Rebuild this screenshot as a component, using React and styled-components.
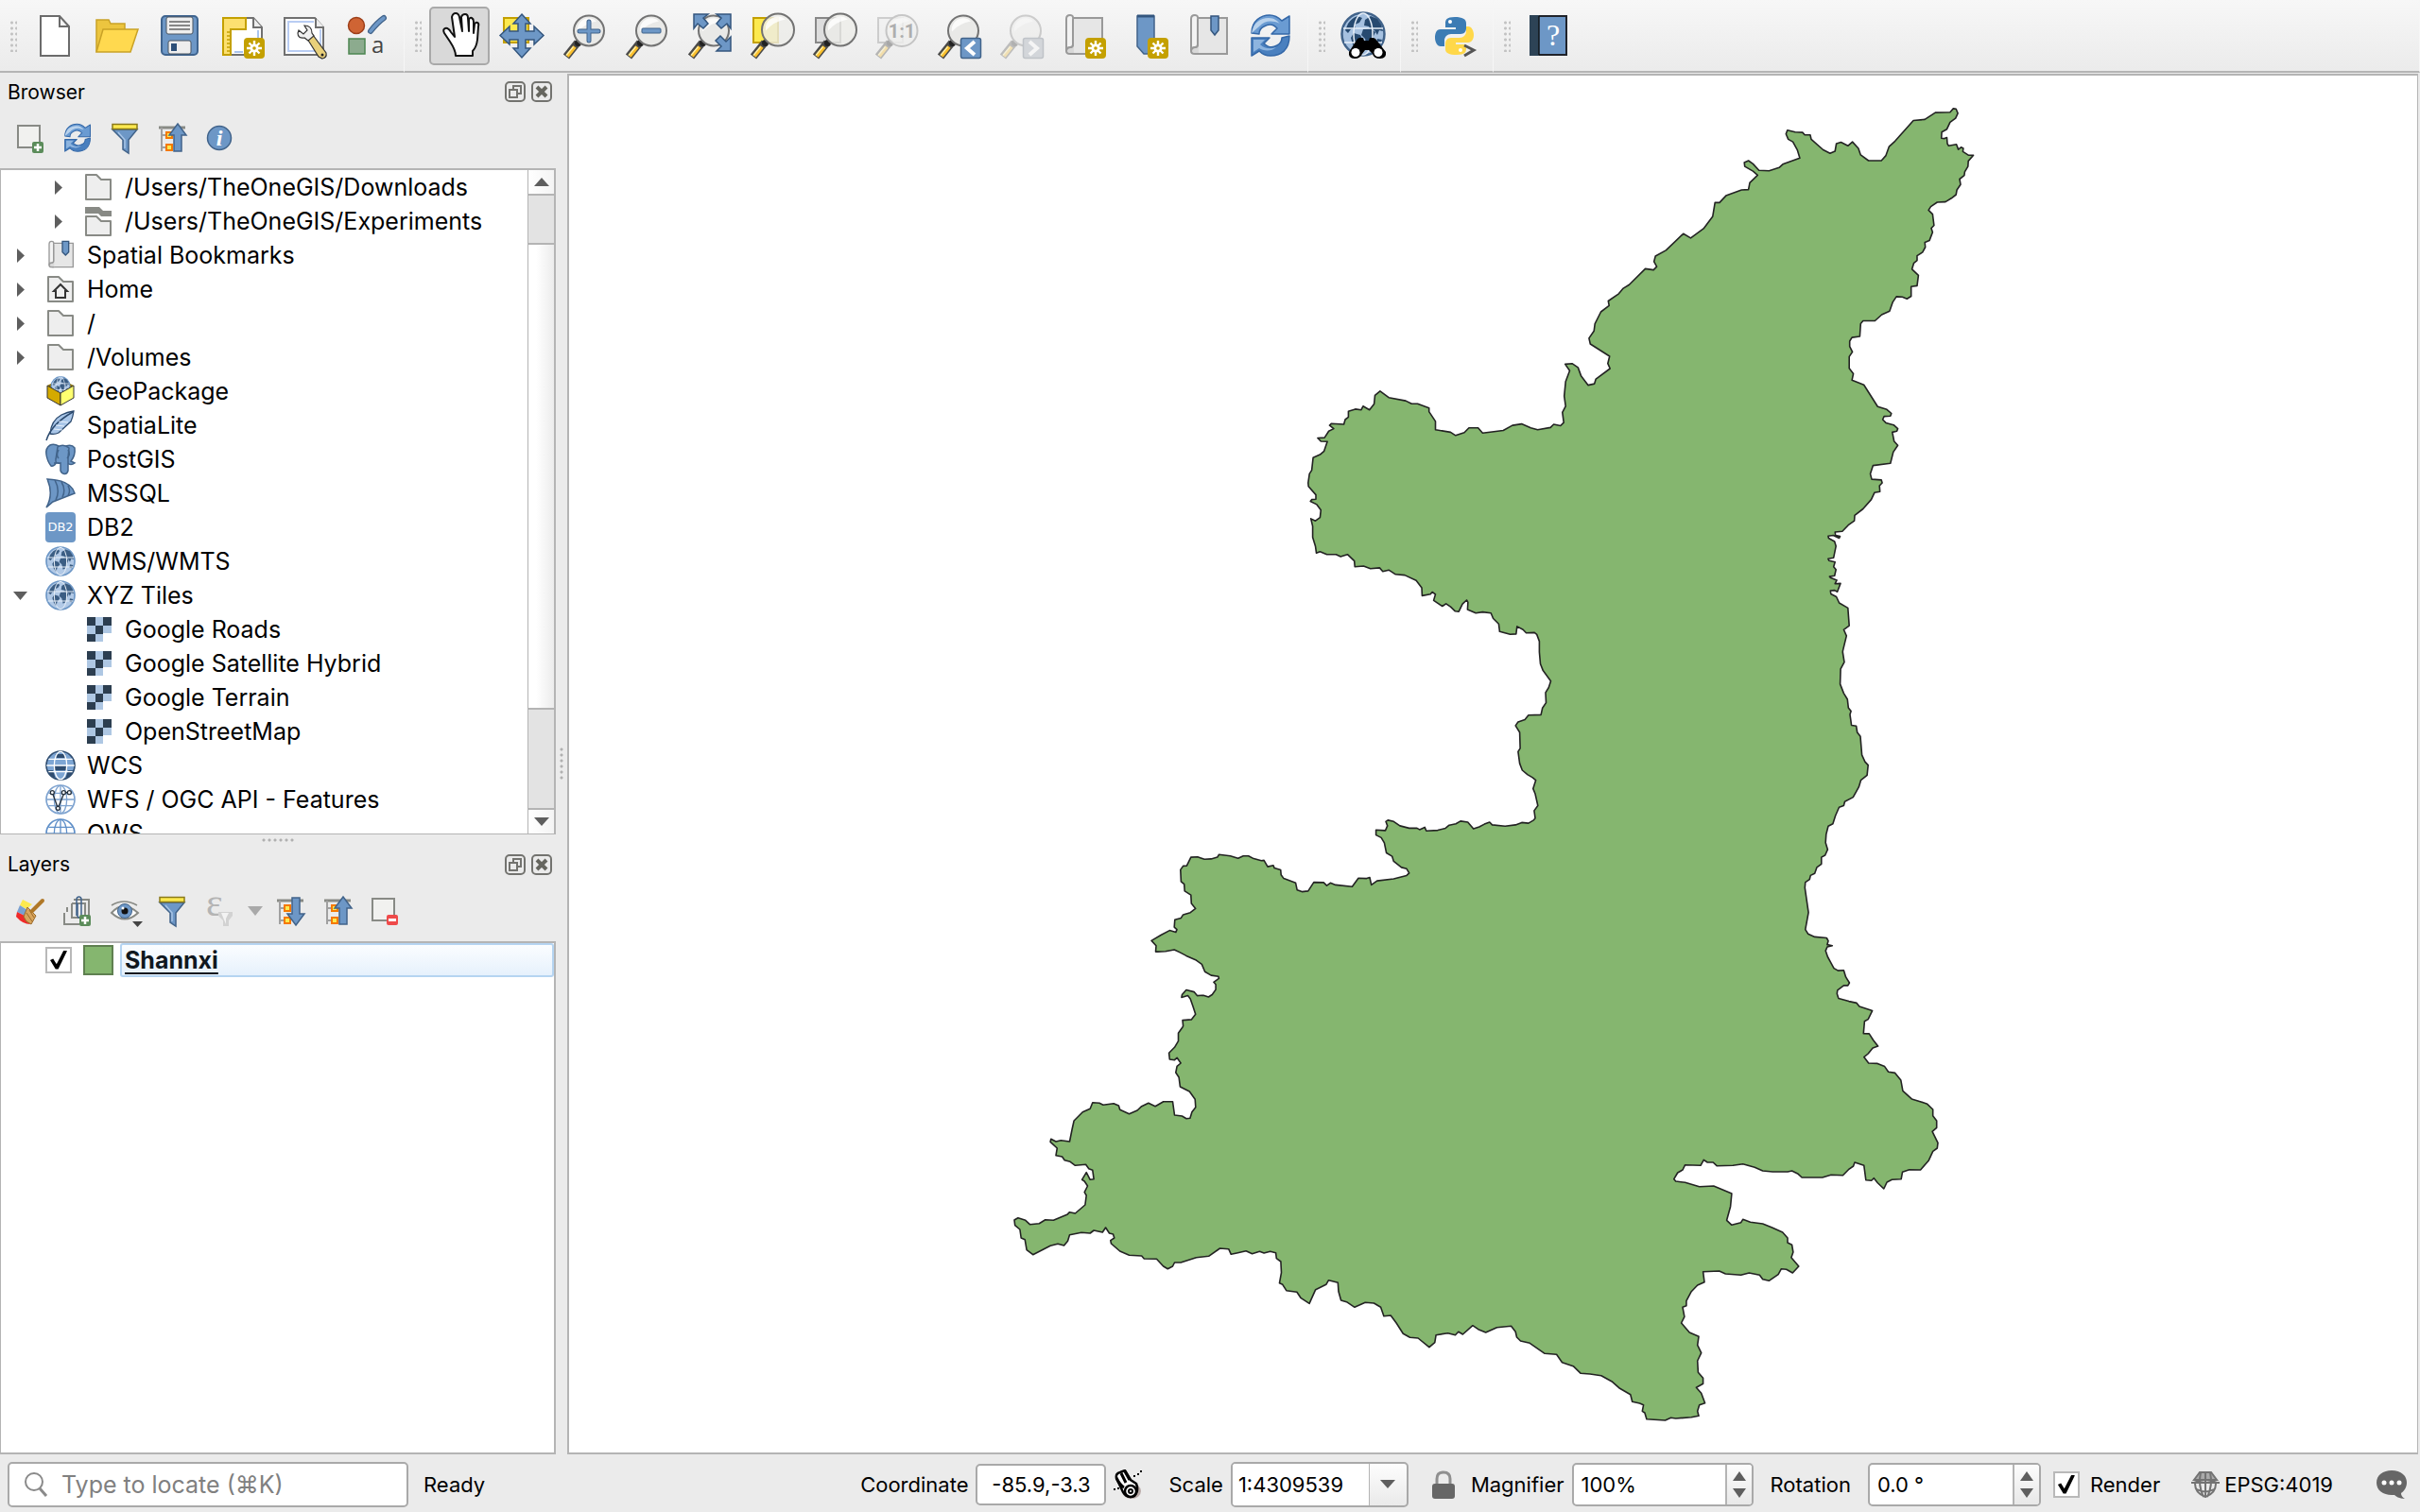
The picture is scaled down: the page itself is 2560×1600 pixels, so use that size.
import React from "react";
import styled, { createGlobalStyle, css } from "styled-components";

const GlobalStyle = createGlobalStyle`
  * { box-sizing: border-box; }
  body {
    margin: 0;
    background: #ebebeb;
    color: #000;
    font-family: Inter, "Liberation Sans", sans-serif;
    font-size: 22px;
  }
  button, input, select { font: inherit; color: inherit; }
`;

const line = "#b4b4b4";

/* ---------- window frame ---------- */

const Window = styled.div`
  display: flex;
  flex-direction: column;
  height: 100vh;
  overflow: hidden;
`;

const Toolbars = styled.header`
  display: flex;
  flex: none;
  height: 77px;
`;

const ToolGroup = styled.div`
  display: flex;
  align-items: center;
  gap: 7px;
  flex: ${(p) => (p.$fill ? 1 : "none")};
  padding: 0 6px 0 10px;
  background: linear-gradient(#f7f7f7, #ebebeb);
  border-right: 1px solid #f6f6f6;
  border-bottom: 2px solid ${line};
`;

const Grip = styled.span`
  width: 8px;
  height: 34px;
  background: radial-gradient(circle, #c2c2c2 1px, transparent 2px) 0 0 / 5px 6px;
`;

const Tools = styled.div`
  display: flex;
`;

const ToolButton = styled.button`
  display: grid;
  place-items: center;
  width: 64px;
  height: 62px;
  margin: 0 1px;
  padding: 0;
  border: 2px solid transparent;
  border-radius: 5px;
  background: none;
  ${(p) =>
    p.$active &&
    css`
      background: #d9d9d9;
      border-color: #a9a9a9;
    `}
`;

const Body = styled.div`
  display: flex;
  flex: 1;
  min-height: 0;
`;

const Dock = styled.aside`
  display: flex;
  flex-direction: column;
  flex: none;
  width: 588px;
`;

const Panel = styled.section`
  display: flex;
  flex-direction: column;
  flex: ${(p) => p.$grow} 1 0;
  min-height: 0;
`;

const PanelHeader = styled.div`
  display: flex;
  align-items: center;
  gap: 6px;
  flex: none;
  height: 40px;
  padding: 0 4px 0 8px;
`;

const PanelTitle = styled.h2`
  flex: 1;
  margin: 0;
  font-size: 21px;
  font-weight: 400;
`;

const HeaderButton = styled.button`
  display: grid;
  place-items: center;
  width: 22px;
  height: 22px;
  padding: 0;
  border: 2px solid #73736f;
  border-radius: 5px;
  background: none;
`;

const PanelTools = styled.div`
  display: flex;
  align-items: center;
  flex: none;
  height: 58px;
  margin-bottom: 3px;
  padding-left: 7px;
`;

const PanelButton = styled.button`
  display: grid;
  place-items: center;
  width: ${(p) => (p.$narrow ? 25 : 50)}px;
  height: 44px;
  padding: 0;
  border: 0;
  background: none;
`;

const RowSplitter = styled.div`
  display: grid;
  place-items: center;
  flex: none;
  height: 12px;
`;

const ColumnSplitter = styled.div`
  display: grid;
  place-items: center;
  flex: none;
  width: 12px;
`;

const Dots = styled.span`
  width: ${(p) => (p.$vertical ? 6 : 36)}px;
  height: ${(p) => (p.$vertical ? 36 : 6)}px;
  background: radial-gradient(circle, #b0b0b0 1px, transparent 2px) 0 0 / 6px 6px;
`;

/* ---------- browser tree ---------- */

const TreeBox = styled.div`
  display: flex;
  flex: 1;
  min-height: 0;
  background: #fff;
  border: 2px solid ${line};
  border-width: 2px 2px 1px 1px;
  overflow: hidden;
`;

const Tree = styled.ul`
  flex: 1;
  margin: 0;
  padding: 0;
  list-style: none;
  overflow: hidden;
`;

const Node = styled.li`
  display: flex;
  align-items: center;
  height: 36px;
  padding-left: ${(p) => p.$depth * 40}px;
  font-size: 25px;
  white-space: nowrap;
`;

const Toggle = styled.button`
  display: grid;
  place-items: center;
  width: 41px;
  height: 36px;
  padding: 0;
  border: 0;
  background: none;
  visibility: ${(p) => (p.$shown ? "visible" : "hidden")};
`;

const NodeIcon = styled.span`
  display: grid;
  place-items: center;
  width: 44px;
  margin-right: 6px;
`;

const ScrollBar = styled.div`
  display: flex;
  flex-direction: column;
  flex: none;
  width: 28px;
  border-left: 1px solid ${line};
  background: #e3e3e3;
`;

const ScrollButton = styled.button`
  display: grid;
  place-items: center;
  height: 25px;
  padding: 0;
  border: 0;
  background: linear-gradient(90deg, #fff, #f4f4f4);
`;

const ScrollGap = styled.div`
  flex: ${(p) => p.$grow} 1 0;
  border-top: 2px solid ${line};
  border-bottom: 2px solid ${line};
`;

const ScrollThumb = styled.div`
  flex: 490 1 0;
  background: linear-gradient(90deg, #fff 30%, #ececec);
`;

/* ---------- layer list ---------- */

const LayerList = styled.ul`
  flex: 1;
  margin: 0;
  padding: 0 0 0 47px;
  list-style: none;
  background: #fff;
  border: 2px solid ${line};
  border-left-width: 1px;
`;

const LayerRow = styled.li`
  display: flex;
  align-items: center;
  height: 36px;
`;

const CheckBox = styled.input`
  appearance: none;
  display: grid;
  place-items: center;
  flex: none;
  width: 28px;
  height: 28px;
  margin: 0;
  border: 2px solid #b9b9b9;
  background: #fff;
  &:checked::before {
    content: "";
    width: 18px;
    height: 20px;
    background: #000;
    clip-path: polygon(0 52%, 18% 45%, 38% 74%, 80% 0, 100% 4%, 48% 100%, 32% 100%);
  }
`;

const Swatch = styled.span`
  width: 32px;
  height: 32px;
  margin: 0 7px 0 12px;
  background: #85b66f;
  border: 2px solid #5f8050;
`;

const LayerName = styled.label`
  flex: 1;
  height: 36px;
  padding-left: 3px;
  border: 2px solid #b5d4f1;
  border-radius: 3px;
  background: linear-gradient(#fbfdff, #e6f1fc);
  color: #10181f;
  font-size: 25px;
  font-weight: 700;
  line-height: 32px;
  text-decoration: underline;
  text-decoration-thickness: 2px;
  text-underline-offset: 4px;
`;

/* ---------- map canvas ---------- */

const Canvas = styled.main`
  flex: 1;
  min-width: 0;
  margin: 1px 2px 0 0;
  background: #fff;
  border: 2px solid ${line};
  border-right-width: 1px;
`;

const MapDrawing = styled.svg`
  display: block;
  width: 100%;
  height: 100%;
`;

/* ---------- status bar ---------- */

const StatusBar = styled.footer`
  display: flex;
  align-items: center;
  flex: none;
  height: 61px;
  padding: 2px 14px 0 8px;
  white-space: nowrap;
`;

const Locator = styled.label`
  display: flex;
  align-items: center;
  gap: 14px;
  width: 424px;
  height: 48px;
  padding-left: 15px;
  background: #fff;
  border: 2px solid #a9a9a9;
  border-radius: 5px;
`;

const LocatorInput = styled.input`
  flex: 1;
  min-width: 0;
  padding: 0;
  border: 0;
  outline: 0;
  background: none;
  font-size: 25px;
  &::placeholder { color: #808080; opacity: 1; }
`;

const Message = styled.span`
  flex: 1;
  padding-left: 16px;
`;

const Field = styled.div`
  display: flex;
  align-items: center;
  gap: ${(p) => p.$gap || 8}px;
  margin-left: ${(p) => p.$before}px;
`;

const TextBox = styled.input`
  width: 138px;
  height: 44px;
  padding: 0;
  text-align: center;
  background: #fff;
  border: 2px solid #a9a9a9;
  border-radius: 5px;
`;

const SelectBox = styled.div`
  display: grid;
  grid-template-columns: 1fr 40px;
  width: 188px;
  height: 48px;
  border: 2px solid #a9a9a9;
  border-radius: 5px;
  background: linear-gradient(#fdfdfd, #eaeaea);
  overflow: hidden;
  & > * { grid-row: 1; }
`;

const Select = styled.select`
  grid-column: 1 / 3;
  appearance: none;
  padding: 0 0 0 6px;
  border: 0;
  background: linear-gradient(90deg, #fff 144px, ${line} 144px, ${line} 145px, transparent 145px);
`;

const SelectArrow = styled.span`
  grid-column: 2;
  display: grid;
  place-items: center;
  pointer-events: none;
`;

const SpinBox = styled.div`
  display: flex;
  width: ${(p) => p.$width}px;
  height: 46px;
  border: 2px solid #a9a9a9;
  border-radius: 5px;
  background: #fff;
  overflow: hidden;
`;

const SpinInput = styled.input`
  flex: 1;
  min-width: 0;
  padding: 0 0 0 8px;
  border: 0;
  background: none;
`;

const SpinButtons = styled.div`
  display: grid;
  grid-template-rows: 1fr 1fr;
  width: 28px;
  padding: 3px 0;
  border-left: 2px solid ${line};
  background: linear-gradient(#fdfdfd, #e8e8e8);
`;

const PlainButton = styled.button`
  display: flex;
  align-items: center;
  justify-content: center;
  gap: 4px;
  padding: 0;
  border: 0;
  background: none;
`;

/* ---------- shared drawings ---------- */

const Drawing = styled.svg`
  display: block;
  overflow: visible;
`;

const Icon = ({ size = 48, box = 48, children }) => (
  <Drawing width={size} height={size} viewBox={`0 0 ${box} ${box}`} aria-hidden="true">
    {children}
  </Drawing>
);

const Triangle = ({ dir, color = "#5e5e5e", w = 16, h = 10 }) => {
  const shapes = {
    up: `M0 ${h}L${w / 2} 0L${w} ${h}z`,
    down: `M0 0H${w}L${w / 2} ${h}z`,
    right: `M0 0L${w} ${h / 2}L0 ${h}z`,
  };
  return (
    <svg width={w} height={h} aria-hidden="true">
      <path d={shapes[dir]} fill={color} />
    </svg>
  );
};

const Sun = () => (
  <g>
    <rect x="26" y="26" width="22" height="22" rx="4" fill="#c4a000" />
    <path d="M37 29v16M29 37h16M31.500 31.500l11 11M42.500 31.500l-11 11" stroke="#fff" strokeWidth="2.400" />
    <circle cx="37" cy="37" r="4.500" fill="#fff" />
    <circle cx="37" cy="37" r="1.800" fill="#c4a000" />
  </g>
);

const Lens = ({ cx = 29, cy = 18.5, r = 16, clear }) => (
  <g>
    <path d="M17 31L5 46" stroke="#4a4a4a" strokeWidth="8" />
    <path d="M14 35.500L6 45.500" stroke="#fbc02d" strokeWidth="4" />
    <path d="M12.500 35.500L5 44.500" stroke="#fff3b0" strokeWidth="1.200" />
    <circle cx="17.500" cy="31.500" r="3.500" fill="#222" />
    <circle cx={cx} cy={cy} r={r} fill={clear ? "#ecece8" : "#e9e9e7"} fillOpacity={clear ? 0.8 : 1} stroke="#737373" strokeWidth="2" />
    <path d={`M${cx - r + 4} ${cy + 1}a${r - 4} ${r - 4} 0 0 1 ${r + 4} -${r - 5}q-12 2-${r + 4} ${r - 5}z`} fill="#fff" fillOpacity="0.8" />
  </g>
);

const Page = ({ x = 4 }) => (
  <g stroke="#707070" strokeWidth="2" fill="#fff">
    <path d={`M${x} 5h32l9 10v29H${x}z`} />
    <path d="M36 5v10h9" fill="#ededed" />
  </g>
);

const Scroll = () => (
  <g stroke="#999" strokeWidth="2">
    <path d="M12 5h32v38H10" fill="#e6e6e6" />
    <path d="M13 7v26q0 3-3 3q-4 0-4 4q0 3 4 3h4" fill="#d8d8d8" />
    <path d="M6 40V6q0-4 4-4t3 5v26q0 3-3 3q-4 0-4 4z" fill="#f3f3f3" />
  </g>
);

const Badge = ({ dir }) => (
  <g>
    <rect x="26.500" y="26.500" width="21" height="21" rx="2" fill="#6d97c6" stroke="#41638a" strokeWidth="1.500" />
    <path d={dir === "left" ? "M41 30l-8 7 8 7" : "M33 30l8 7-8 7"} fill="none" stroke="#fff" strokeWidth="4" />
  </g>
);

const land = [
  "M8 13q4-6 10-8l5 2-3 5-5 2 1 4-5 1-3 4-3-3z",
  "M14 23l7 2 2 4-4 5-2 7-4-6-2-7z",
  "M26 9l6-4 7 3 4 6 2 7-4-1-2 5-3-5-4-1-2-3-5-1z",
  "M24 19l8-1 5 4-3 6-2 7-4 2-2-8-4-4z",
  "M39 29l5 1-2 5-4-1z",
];

const Earth = ({ sea = "#b1c9e6", ground = "#3b5d83", rim = "#6d97c6" }) => (
  <g>
    <circle cx="24" cy="24" r="22.500" fill={sea} stroke={rim} strokeWidth="2.500" />
    {land.map((d) => (
      <path key={d} d={d} fill={ground} />
    ))}
    <g fill="none" stroke="#e8f0f9" strokeWidth="1.500">
      <ellipse cx="24" cy="24" rx="10" ry="22" />
      <path d="M3 18h42M4 33h40" />
    </g>
  </g>
);

const GridGlobe = ({ fill, color, band }) => (
  <g>
    <circle cx="24" cy="24" r="22.500" fill={fill} stroke={color} strokeWidth="2.500" />
    {band && <path d="M16 6h16l-1 6H17zM14 24h20v8H14zM3 32h9l4 12Q7 41 3 32zM45 32h-9l-4 12q9-3 13-12z" fill={color} />}
    <g fill="none" stroke={band ? "#fff" : color} strokeWidth="2">
      <ellipse cx="24" cy="24" rx="10" ry="22" />
      <path d="M5 14h38M2 24h44M5 34h38" />
      {!band && <path d="M24 2v44" />}
    </g>
  </g>
);

const Refresh = () => (
  <g stroke="#3468a8" strokeWidth="1.500" strokeLinejoin="round">
    <path d="M4 21C4 8 14 2 23 2c6 0 10 3 13 6l8-5v19H25l6-6c-4-5-9-5-14-2-4 2-5 5-5 8z" fill="#6a9bd2" />
    <path d="M4 21C6 10 13 5 22 5c6 0 9 3 12 6-9-4-16-3-22 3z" fill="#b9d2ec" stroke="none" />
    <path d="M44 24c0 15-9 21-20 21-6 0-9-2-12-5l-8 5V26h19l-6 6c4 4 9 5 14 2 4-2 5-5 5-8z" fill="#4a80bf" />
    <path d="M6 28h12l-5 5c5 5 11 5 17 3-5 5-14 4-18 1l-6 4z" fill="#8db4df" stroke="none" />
  </g>
);

const Funnel = () => (
  <g stroke="#41638a" strokeWidth="1.500">
    <path d="M3 7h26l-9 11v14l-6-4V18z" fill="#6d97c6" />
    <path d="M9 10l7 8v9" fill="none" stroke="#a8c5e6" />
    <rect x="3" y="1.500" width="26" height="5" fill="#fce94f" stroke="#8a7a1a" />
  </g>
);

const TreeArrow = ({ up }) => (
  <g>
    <path d="M2 5h28" stroke="#888a85" strokeWidth="3" />
    <path d="M5 5v25M5 13h5M5 26h5" stroke="#a0a0a0" strokeWidth="2" fill="none" />
    <path d="M10 10h6v6h-6zM10 23h6v6h-6z" fill="#fce94f" stroke="#f57900" strokeWidth="2" />
    <path
      d={up ? "M22 1l9 12h-5v17h-8V13h-5z" : "M22 31l9-12h-5V2h-8v17h-5z"}
      fill="#6d97c6"
      stroke="#41638a"
      strokeWidth="1.500"
    />
  </g>
);

const Folder = ({ home, linked }) => (
  <Icon size={32} box={32}>
    {linked && <path d="M2 1h15l4 4h9v6H19l-3-3H2z" fill="#888a85" />}
    <path
      d={linked ? "M3 11h11l5 5h10v15H3z" : "M3 3h11l5 5h10v21H3z"}
      fill="#eee"
      stroke="#888a85"
      strokeWidth="2"
      strokeLinejoin="round"
    />
    {home && <path d="M9 18l7-7 7 7h-2v7H11v-7z" fill="none" stroke="#333" strokeWidth="2" />}
  </Icon>
);

/* ---------- main toolbar ---------- */

const fileTools = [
  ["New Project", <path key="a" d="M9 3h20l10 11v31H9zM29 3v11h10" fill="#fff" stroke="#6b6b6b" strokeWidth="2" />],
  [
    "Open Project",
    <g key="a" stroke="#c9a227" strokeWidth="1.500">
      <path d="M2 40V7h13l2 4h15v7L20 40z" fill="#ecc53f" />
      <path d="M2 41L9 17h37l-8 24z" fill="#ffd94f" />
    </g>,
  ],
  [
    "Save Project",
    <g key="a">
      <rect x="5" y="3" width="38" height="41" rx="4" fill="#6d97c6" stroke="#3f648f" strokeWidth="2" />
      <rect x="10" y="4" width="28" height="18" rx="2" fill="#eee" stroke="#4a5560" />
      <path d="M13 9h22M13 13h22M13 17h22" stroke="#666" strokeWidth="1.500" />
      <rect x="12" y="29" width="24" height="14" rx="2" fill="#eee" stroke="#4a5560" />
      <rect x="15" y="32" width="6" height="8" fill="#2d4f78" />
    </g>,
  ],
  [
    "New Print Layout",
    <g key="a">
      <Page />
      <path d="M4 5h24v12H12v27H4z" fill="#fce070" stroke="#c4a000" strokeWidth="2" />
      <path d="M8 20h4M8 24h4M8 28h4M8 32h4M8 36h4M8 40h4" stroke="#c4a000" strokeWidth="1.500" />
      <path d="M41 18v8M16 41h9" stroke="#a9c4ee" strokeWidth="2" />
      <Sun />
    </g>,
  ],
  [
    "Layout Manager",
    <g key="a">
      <Page x={3} />
      <path d="M34 9H7v31h34V17" fill="none" stroke="#b9cdf3" strokeWidth="2" />
      <path d="M27 27l6-4 14 19q1 5-4 6l-4-2z" fill="#e9d07a" stroke="#333" strokeWidth="1.200" />
      <circle cx="43" cy="44" r="1.500" fill="#222" />
      <path d="M24 13q8 0 8 8l2 3-6 5-4-3q-7 1-7-5l1-3 5 4 4-4z" fill="#f0f0f0" stroke="#333" strokeWidth="1.200" />
    </g>,
  ],
  [
    "Style Manager",
    <g key="a">
      <circle cx="13" cy="13" r="8.500" fill="#cf6434" stroke="#9d3f1a" strokeWidth="1.500" />
      <path d="M28 19q7-9 14-14" stroke="#41638a" strokeWidth="6" strokeLinecap="round" />
      <path d="M28 19q7-9 14-14" stroke="#6d97c6" strokeWidth="3.500" strokeLinecap="round" />
      <rect x="5" y="27" width="17" height="16" fill="#8cab8e" stroke="#4d8652" strokeWidth="1.500" />
      <text x="29" y="42" fontSize="24" fill="#444" fontFamily="Open Sans, sans-serif">a</text>
    </g>,
  ],
];

const arrowFour =
  "M24 1l9 10h-5v8h9v-5l10 9.500-10 9.500v-5h-9v9h5L24 47l-9-10h5v-9h-9v5L1 23.500 11 14v5h9v-8h-5z";

const mapTools = [
  [
    "Pan Map",
    <path
      key="a"
      d="M20 45Q20 39 14 30L8 21Q6 17 9 16T15 20L19 25L16 4Q17 0 20 0T24 4L27 19L26 4Q27 1 30 1T33 5L34 19V7Q35 4 37 5T39 9V21L40 12Q41 9 43 10T44 14L43 28Q42 36 38 40V45z"
      fill="#fff"
      stroke="#111"
      strokeWidth="2"
      strokeLinejoin="round"
    />,
    true,
  ],
  [
    "Pan Map to Selection",
    <g key="a">
      <rect x="5" y="5" width="26" height="26" fill="#fce94f" stroke="#c4a000" strokeWidth="2" />
      <path d={arrowFour} fill="#6d97c6" stroke="#34567e" strokeWidth="1.500" />
    </g>,
  ],
  ["Zoom In", <g key="a"><Lens /><path d="M29 9v20M19 19h20" stroke="#41638a" strokeWidth="5" strokeLinecap="round" /><path d="M29 9v20M19 19h20" stroke="#6d97c6" strokeWidth="3" strokeLinecap="round" /></g>],
  ["Zoom Out", <g key="a"><Lens /><rect x="19" y="16" width="20" height="5" rx="1" fill="#6d97c6" stroke="#41638a" /></g>],
  [
    "Zoom Full",
    <g key="a">
      <Lens />
      <g fill="#6d97c6" stroke="#34567e" strokeWidth="1.500">
        <path d="M8 1h15l-5 4 5 6-5 5-6-5-4 5z" />
        <path d="M47 1v15l-4-5-6 5-5-5 5-6-5-4z" />
        <path d="M47 40H32l5-5-6-6 5-5 6 6 5-5z" />
      </g>
    </g>,
  ],
  ["Zoom to Selection", <g key="a"><rect x="5" y="5" width="26" height="26" fill="#fce94f" stroke="#c4a000" strokeWidth="2" /><Lens cx={31} cy={17.5} r={17} clear /></g>],
  ["Zoom to Layer", <g key="a"><rect x="5" y="5" width="26" height="26" fill="#ddd" stroke="#888" strokeWidth="2" /><Lens cx={31} cy={17.5} r={17} clear /></g>],
  [
    "Zoom to Native Resolution",
    <g key="a" opacity="0.35">
      <rect x="5" y="5" width="26" height="26" fill="#eee" stroke="#888" strokeWidth="2" />
      <Lens cx={30} cy={18.5} r={16.5} clear />
      <text x="30" y="26" fontSize="20" fontWeight="700" textAnchor="middle" fill="#333" fontFamily="Roboto, sans-serif">1:1</text>
    </g>,
  ],
  ["Zoom Last", <g key="a"><Lens /><Badge dir="left" /></g>],
  [
    "Zoom Next",
    <g key="a">
      <g opacity="0.3"><Lens /></g>
      <rect x="26.500" y="26.500" width="21" height="21" rx="2" fill="#d3d6da" stroke="#bfc3c8" strokeWidth="1.500" />
      <path d="M33 30l8 7-8 7" fill="none" stroke="#f5f5f5" strokeWidth="4" />
    </g>,
  ],
  ["New Map View", <g key="a"><Scroll /><Sun /></g>],
  ["New Spatial Bookmark", <g key="a"><path d="M15 3h18v35l-5 5h-6l-7-8z" fill="#6d97c6" stroke="#41638a" strokeWidth="1.500" /><path d="M15 3h18" stroke="#34567e" strokeWidth="3" /><Sun /></g>],
  ["Show Spatial Bookmarks", <g key="a"><Scroll /><path d="M27 3h8v15l-4 5-4-5z" fill="#6d97c6" stroke="#34567e" strokeWidth="1.500" /></g>],
  ["Refresh", <Refresh key="a" />],
];

const metaTools = [
  [
    "MetaSearch",
    <g key="a">
      <g transform="translate(0 -2)"><Earth sea="#a6c1e0" ground="#274a70" rim="#41638a" /></g>
      <path d="M18 27l2-1h4l1 3h5l1-3h4l2 1 11 14q1 7-6 7t-8-5l-4-4h-4l-3 4q-2 5-8 5-7 0-6-7z" fill="#000" />
      <circle cx="16" cy="41.500" r="4.500" fill="#fff" />
      <circle cx="40" cy="41.500" r="4.500" fill="#fff" />
    </g>,
  ],
];

const pythonTools = [
  [
    "Python Console",
    <g key="a">
      <path d="M23 4c-9 0-10 3-10 7v4h11v2H8c-5 0-6 5-6 9s2 9 6 9h4v-6c0-4 3-7 7-7h10c4 0 6-3 6-6v-5c0-5-4-7-12-7z" fill="#3c7cb4" />
      <circle cx="18" cy="9" r="2" fill="#fff" />
      <path d="M25 44c9 0 10-3 10-7v-4H24v-2h13c4 0 6-4 6-8s-2-9-6-9h-2v5c0 4-3 7-7 7H19c-4 0-6 3-6 6v6c0 4 4 6 12 6z" fill="#ffd84a" />
      <circle cx="29" cy="39" r="2" fill="#fff" />
      <path d="M33 34l10 5-10 6" fill="none" stroke="#555" strokeWidth="3" />
    </g>,
  ],
];

const helpTools = [
  [
    "Help Contents",
    <g key="a">
      <rect x="5" y="3" width="38" height="41" fill="#6d97c6" stroke="#20232a" strokeWidth="2" />
      <rect x="4" y="2" width="10" height="43" fill="#2d4356" />
      <path d="M14 3v41" stroke="#101418" strokeWidth="1.500" />
      <text x="29" y="34" fontSize="32" textAnchor="middle" fill="#fff" fontFamily="Liberation Serif, serif">?</text>
    </g>,
  ],
];

const ToolBar = ({ tools, fill }) => (
  <ToolGroup $fill={fill}>
    <Grip />
    <Tools>
      {tools.map(([name, art, active]) => (
        <ToolButton key={name} type="button" aria-label={name} $active={active}>
          <Icon>{art}</Icon>
        </ToolButton>
      ))}
    </Tools>
  </ToolGroup>
);

/* ---------- panels ---------- */

const Header = ({ title }) => (
  <PanelHeader>
    <PanelTitle>{title}</PanelTitle>
    <HeaderButton type="button" aria-label={`Float ${title}`}>
      <svg width="16" height="16" viewBox="0 0 16 16" fill="none" stroke="#73736f" strokeWidth="2">
        <path d="M6 6V2h8v8h-4" />
        <rect x="2" y="6" width="8" height="8" />
      </svg>
    </HeaderButton>
    <HeaderButton type="button" aria-label={`Close ${title}`}>
      <svg width="16" height="16" viewBox="0 0 16 16" stroke="#66665f" strokeWidth="4">
        <path d="M3 3l10 10M13 3L3 13" />
      </svg>
    </HeaderButton>
  </PanelHeader>
);

const small = (art) => <Icon size={32} box={32}>{art}</Icon>;

const browserTools = [
  [
    "Add Selected Layers",
    <g key="a">
      <rect x="3" y="3" width="23" height="23" fill="#f1f1ef" stroke="#888a85" strokeWidth="2" />
      <rect x="18" y="20" width="12" height="12" rx="2" fill="#5b8c5a" />
      <path d="M24 22v8M20 26h8" stroke="#fff" strokeWidth="2.500" />
    </g>,
  ],
  ["Refresh", <g key="a" transform="scale(.67)"><Refresh /></g>],
  ["Filter Browser", <Funnel key="a" />],
  ["Collapse All", <TreeArrow key="a" up />],
  [
    "Properties",
    <g key="a">
      <circle cx="16" cy="16" r="12.500" fill="#6d97c6" stroke="#41638a" strokeWidth="1.500" />
      <text x="16" y="24" fontSize="24" fontStyle="italic" fontWeight="700" textAnchor="middle" fill="#fff" fontFamily="Liberation Serif, serif">i</text>
    </g>,
  ],
];

const layerTools = [
  [
    "Open Layer Styling",
    <g key="a">
      <path d="M8 4l10 5-6 5-7-4z" fill="#fce94f" />
      <path d="M5 10l8 5-3 6-8-4z" fill="#7aa0d0" />
      <path d="M2 17l8 4 6 9q-8 0-15-8z" fill="#ef2929" />
      <path d="M13 12l9 9-5 9q-6-2-8-8z" fill="#d9a55c" stroke="#9a6a2a" />
      <path d="M12 18l6 9M15 15l5 8" stroke="#9a6a2a" />
      <path d="M18 16L29 5" stroke="#b07828" strokeWidth="4" strokeLinecap="round" />
    </g>,
  ],
  [
    "Add Group",
    <g key="a" fill="none" stroke="#888a85" strokeWidth="2">
      <path d="M12 4h16v17M10 8h14v16M10 8v15h14M5 12v5M2 18v12h16" />
      <path d="M15 21V4q0-3 2.500-3T20 4v17q0 2-2 2t-2-2V8" stroke="#41638a" strokeWidth="1.500" />
      <rect x="18" y="20" width="12" height="12" rx="2" fill="#5b8c5a" stroke="none" />
      <path d="M24 22v8M20 26h8" stroke="#fff" strokeWidth="2.500" />
    </g>,
  ],
  [
    "Manage Map Themes",
    <g key="a">
      <path d="M2 18q12-14 28 0Q16 31 2 18z" fill="#fff" stroke="#888a85" strokeWidth="2" />
      <path d="M2 10q13-8 27 0" fill="none" stroke="#888a85" strokeWidth="1.500" />
      <circle cx="16" cy="16" r="7.500" fill="#6d97c6" stroke="#41638a" />
      <circle cx="16" cy="16" r="3.500" fill="#111" />
      <circle cx="14" cy="13" r="1.500" fill="#fff" />
      <path d="M24 27h11l-5.500 6z" fill="#444" />
    </g>,
  ],
  ["Filter Legend", <Funnel key="a" />],
  [
    "Filter Legend by Expression",
    <g key="a">
      <text x="2" y="21" fontSize="42" fill="#b4b4b4" fontFamily="Liberation Serif, serif">ε</text>
      <path d="M15 17h15v4l-4 5v6h-6v-6l-5-5z" fill="#d2d2d2" />
      <path d="M18 18h8l-3 6v6" fill="#f3f3f3" />
    </g>,
  ],
  ["Expression Filter Menu", null],
  ["Expand All", <TreeArrow key="a" />],
  ["Collapse All", <TreeArrow key="a" up />],
  [
    "Remove Layer",
    <g key="a">
      <rect x="3" y="3" width="23" height="23" fill="#f1f1ef" stroke="#888a85" strokeWidth="2" />
      <rect x="18" y="20" width="12" height="11" rx="2" fill="#ef4a4a" />
      <path d="M20 25.500h8" stroke="#fff" strokeWidth="3" />
    </g>,
  ],
];

const PanelToolBar = ({ tools }) => (
  <PanelTools>
    {tools.map(([name, art]) => (
      <PanelButton key={name} type="button" aria-label={name} $narrow={!art}>
        {art ? small(art) : <Triangle dir="down" color="#a9a9a9" />}
      </PanelButton>
    ))}
  </PanelTools>
);

const earth = <Icon size={32} box={48}><Earth /></Icon>;

const tiles = (
  <Icon size={32} box={32}>
    <path d="M4 3h26v17H21v9H4z" fill="#aec7e3" />
    <path d="M4 3h9v9H4zM21 3h9v9h-9zM13 12h8v9h-8zM4 21h9v8H4z" fill="#2c3e50" />
  </Icon>
);

const nodes = [
  { name: "/Users/TheOneGIS/Downloads", depth: 1, state: "right", icon: <Folder /> },
  { name: "/Users/TheOneGIS/Experiments", depth: 1, state: "right", icon: <Folder linked /> },
  {
    name: "Spatial Bookmarks",
    depth: 0,
    state: "right",
    icon: <Icon size={32}><Scroll /><path d="M27 2h10v17l-5 5-5-5z" fill="#6d97c6" stroke="#34567e" strokeWidth="2" /></Icon>,
  },
  { name: "Home", depth: 0, state: "right", icon: <Folder home /> },
  { name: "/", depth: 0, state: "right", icon: <Folder /> },
  { name: "/Volumes", depth: 0, state: "right", icon: <Folder /> },
  {
    name: "GeoPackage",
    depth: 0,
    icon: (
      <Icon size={32} box={32}>
        <path d="M2 10l14-7 14 7-14 8z" fill="#8a6d00" />
        <g transform="translate(5.500 0) scale(.44)"><Earth /></g>
        <path d="M2 10l14 8v13L2 23z" fill="#d4aa00" stroke="#333" />
        <path d="M30 10l-14 8v13l14-8z" fill="#ffff70" stroke="#333" />
      </Icon>
    ),
  },
  {
    name: "SpatiaLite",
    depth: 0,
    icon: (
      <Icon size={32} box={32}>
        <path d="M5 25Q6 11 17 5q6-3 13-4-1 7-3 11L14 24q-4 2-9 1z" fill="#a9c6e8" stroke="#2c4a6e" strokeWidth="1.300" />
        <path d="M1 32Q6 15 29 2" fill="none" stroke="#2c4a6e" strokeWidth="1.500" />
        <path d="M11 16l9 1M14 12l10 1M9 20l9 1" stroke="#e6f0fb" />
      </Icon>
    ),
  },
  {
    name: "PostGIS",
    depth: 0,
    icon: (
      <Icon size={32} box={32}>
        <g fill="#6d97c6" stroke="#41638a" strokeWidth="1.500">
          <path d="M5 1Q0 4 1 11t5 12q4 1 6-5L14 2Q9-1 5 1z" />
          <path d="M22 2q6-2 9 2 1 8-4 14l4 2q-4 3-8 0z" />
          <path d="M13 3q6-4 12 1l-1 10v14q-1 4-4 3.500T16 28v-8q-6 1-5-4z" />
          <path d="M14 6q-3 6 0 9M24 6q3 5-1 9M9 20h6" fill="none" />
        </g>
      </Icon>
    ),
  },
  {
    name: "MSSQL",
    depth: 0,
    icon: (
      <Icon size={32} box={32}>
        <g fill="#6d97c6" stroke="#41638a" strokeWidth="1.500">
          <path d="M2 1q25 1 29 15L8 25l-7 6q8-14 1-30z" />
          <path d="M10 2q6 11 1 21M17 4q5 8 1 16M24 8q3 6 0 10" fill="none" />
        </g>
      </Icon>
    ),
  },
  {
    name: "DB2",
    depth: 0,
    icon: (
      <Icon size={32} box={32}>
        <rect width="32" height="32" rx="4" fill="#6d97c6" />
        <text x="16" y="20" fontSize="13" textAnchor="middle" fill="#fff" fontFamily="DejaVu Sans, sans-serif">DB2</text>
      </Icon>
    ),
  },
  { name: "WMS/WMTS", depth: 0, icon: earth },
  { name: "XYZ Tiles", depth: 0, state: "down", icon: earth },
  { name: "Google Roads", depth: 1, icon: tiles },
  { name: "Google Satellite Hybrid", depth: 1, icon: tiles },
  { name: "Google Terrain", depth: 1, icon: tiles },
  { name: "OpenStreetMap", depth: 1, icon: tiles },
  { name: "WCS", depth: 0, icon: <Icon size={32}><GridGlobe fill="#7ea6d4" color="#2f4d70" band /></Icon> },
  {
    name: "WFS / OGC API - Features",
    depth: 0,
    icon: (
      <Icon size={32}>
        <GridGlobe fill="#fff" color="#7ea3d0" />
        <path d="M11 13l9 25 10-25h8" fill="none" stroke="#26323f" strokeWidth="2" />
        <g fill="#fff" stroke="#26323f" strokeWidth="2">
          <circle cx="11" cy="13" r="3" /><circle cx="20" cy="38" r="3" /><circle cx="29" cy="13" r="3" /><circle cx="38" cy="13" r="3" />
        </g>
      </Icon>
    ),
  },
  { name: "OWS", depth: 0, icon: <Icon size={32}><GridGlobe fill="#fff" color="#5f8fc8" /></Icon> },
];

/* ---------- province boundary ---------- */

/* The ring is digitised on three sheets; each one has its own origin and scale. */
const sheets = {
  north: { x: 1360, y: 90, sx: 2.063, sy: 2.613 },
  middle: { x: 1200, y: 640, sx: 1.823, sy: 2.8 },
  south: { x: 1050, y: 1080, sx: 1.522, sy: 3 },
};

const ring = [
  ["north", "1457,65 1463,66 1467,78 1462,92 1450,103 1443,122 1432,130 1431,147 1438,148 1443,145 1444,162 1447,168 1464,164 1468,178 1474,172 1479,175 1478,184 1490,194 1501,194 1490,210 1489,225 1482,240 1481,250 1471,260 1473,275 1465,290 1463,303 1453,313 1440,323 1422,324 1408,336 1403,346 1412,357 1415,388 1409,396 1412,407 1405,430 1395,435 1396,448 1390,462 1378,472 1378,485 1371,492 1367,509 1381,526 1378,555 1365,557 1365,584 1356,591 1346,586 1333,585 1325,600 1318,625 1301,635 1286,652 1260,652 1255,660 1253,695 1236,698 1231,708 1231,723 1237,738 1230,751 1230,783 1239,798 1236,816 1262,829 1292,889 1312,897 1322,908 1320,915 1306,916 1303,925 1310,934 1327,940 1336,950 1334,957 1324,960 1328,985 1336,996 1326,1015 1320,1046 1282,1052 1276,1075 1279,1090 1300,1092 1302,1100 1296,1108 1297,1124 1285,1127 1278,1146 1260,1172 1242,1190 1241,1205 1228,1217 1215,1234 1199,1236 1200,1245 1210,1248 1208,1253 1195,1245 1184,1247 1185,1253 1198,1262 1201,1275 1196,1307 1184,1310 1186,1315 1199,1319 1196,1332 1201,1340 1198,1357 1187,1359 1190,1363 1203,1369 1199,1379 1211,1378 1204,1401 1198,1397 1189,1398 1190,1407 1202,1415 1208,1432 1227,1446 1230,1495 1218,1506 1224,1523 1216,1565"],
  ["middle", "1366,140 1369,170 1362,190 1361,235 1368,262 1375,280 1377,305 1382,315 1380,325 1383,357 1392,359 1394,378 1400,390 1403,445 1409,465 1415,475 1413,505 1401,520 1397,540 1386,570 1370,583 1368,595 1359,600 1352,625 1347,649 1338,656 1334,680 1333,705 1337,725 1332,742 1325,748 1325,768 1316,778 1312,796 1304,802 1302,814 1294,822 1293,838 1300,912 1294,962 1299,975 1312,984 1335,987 1338,996 1336,1007 1346,1010 1336,1014 1333,1025 1337,1043 1349,1077 1357,1084 1368,1083 1372,1103 1379,1120 1376,1128 1368,1128 1356,1142 1355,1152 1358,1166 1378,1175 1393,1180 1398,1190 1423,1203 1415,1228 1408,1234 1406,1270 1417,1271 1425,1290 1434,1308 1424,1313 1415,1330 1407,1340 1416,1358 1433,1359 1447,1368 1454,1384 1467,1387 1478,1408 1482,1440 1499,1464 1514,1471"],
  ["south", "1505,265 1514,282 1514,302 1520,318 1520,340 1513,352 1522,388 1521,405 1514,415 1507,445 1494,474 1476,473 1465,481 1463,503 1448,505 1440,513 1435,534 1425,515 1419,500 1415,508 1406,506 1403,460 1388,450 1386,462 1378,473 1369,491 1350,490 1336,498 1303,498 1297,487 1287,477 1280,480 1256,480 1240,477 1227,466 1208,455 1192,460 1166,461 1160,450 1151,450 1145,442 1140,460 1115,458 1111,474 1103,483 1097,503 1100,510 1115,514 1138,527 1161,525 1190,549 1188,590 1182,634 1190,649 1205,641 1208,631 1220,640 1240,645 1255,657 1272,672 1280,690 1280,705 1287,712 1289,735 1286,752 1298,780 1288,801 1278,790 1270,788 1265,806 1250,826 1240,821 1235,808 1218,801 1205,808 1180,804 1170,795 1144,797 1146,830 1135,840 1125,860 1117,890 1117,905 1111,910 1114,940 1109,960 1122,990 1137,1003 1135,1030 1141,1055 1135,1080 1136,1117 1144,1135 1144,1153 1133,1165 1141,1183 1147,1214 1138,1220 1135,1240 1137,1255 1125,1259 1100,1263 1092,1261 1083,1269 1053,1265 1050,1245 1046,1240 1048,1220 1042,1215 1030,1210 1027,1187 1010,1168 998,1147 980,1127 962,1122 947,1120 935,1097 917,1085 908,1060 889,1057 865,1024 850,1017 844,1005 842,988 835,970 812,974 794,990 782,980 773,968 757,996 750,988 745,998 733,992 714,998 712,1022 703,1037 685,1008 672,1006 661,994 650,960 641,936 630,938 625,910 614,897 600,895 583,910 570,893 561,888 557,860 556,832 541,824 537,838 520,854 510,898 496,880 490,862 473,857 467,838 462,833 465,800 464,765 457,755 456,737 447,733 437,738 430,733 418,740 408,731 395,737 384,742 380,725 366,723 348,748 328,752 303,768 293,768 290,780 282,788 275,780 264,757 244,756 240,747 220,745 205,732 191,708 190,698 196,690 194,678 188,675 182,657 177,672 163,666 157,675 143,673 124,680 121,700 115,714 105,709 93,715 65,743 55,728 52,695 46,690 44,663 36,650 35,633 41,626 53,634 60,647 75,644 85,632 98,634 120,616 124,608 133,612 149,585 151,555 148,545 153,525 148,510 144,505 151,482 157,505 163,503 161,475 155,470 150,457 133,460 125,448 116,443 112,432 102,428 104,405 93,385 94,376 102,384 110,380 124,384 128,345 131,318 145,290 157,280 161,260 172,262 178,268 195,263 203,270 205,283 220,296 233,285 240,272 251,262 262,272 275,257 290,257 293,300 305,303 312,311 318,310 321,290 327,275 326,250 317,225 302,210 300,180 295,165 297,145 303,135 297,118 293,125 285,123 284,103 293,85 299,65 299,40 306,20"],
  ["middle", "94,1248 93,1231 110,1229 118,1213 113,1190 108,1168 103,1158 91,1163 92,1155 100,1141 115,1147 121,1158 133,1157 143,1162 150,1155 157,1140 157,1125 153,1118 163,1107 162,1101 148,1098 136,1087 130,1065 118,1052 100,1040 88,1030 77,1022 60,1027 45,1028 41,1028 42,1010 33,995 52,978 68,965 80,970 82,962 77,955 78,933 90,928 94,918 108,912 118,900 110,885 109,860 97,848 96,828 90,820 89,785 94,774 101,773 109,748 122,747 135,754 148,753 160,748 163,740 185,744 200,751 210,744 220,744 230,752 245,758 250,757 257,776 268,772 270,780 282,785 283,800 288,811 311,824 314,845 323,850 335,848 346,822 365,823 371,832 378,824 388,830 420,835 432,810 448,811 454,808 457,830 468,818 500,812 525,802 530,795 525,782 515,778 500,760 497,745 486,735 482,705 476,690 466,682 466,667 484,669 488,655 485,642 489,638 500,642 512,655 530,662 545,662 550,666 560,659 563,670 585,668 600,662 607,653 620,649 629,641 643,644 654,664 665,658 675,650 685,644 690,652 715,656 735,652 747,645 760,647 770,638 773,632 771,610 778,595 773,560 769,545 774,520 768,512 758,503 748,490 743,470 740,435 744,425 743,378 735,358 740,347 753,340 760,327 784,326 787,306 794,290 793,260 799,245 803,226 788,195 783,175 781,140 781,108 776,88"],
  ["north", "543,1514 525,1515 518,1506 505,1497 503,1518 490,1519 467,1511 465,1490 453,1475 448,1460 430,1457 415,1460 397,1450 398,1430 395,1424 386,1435 378,1456 370,1455 360,1443 350,1434 342,1441 323,1425 327,1408 320,1402 316,1408 298,1412 297,1390 285,1370 260,1355 240,1353 225,1341 212,1345 205,1335 185,1337 170,1330 151,1332 150,1316 135,1298 120,1304 110,1298 90,1298 75,1290 67,1294 65,1275 59,1250 59,1220 55,1199 65,1205 75,1196 77,1175 68,1160 54,1151 57,1146 66,1145 66,1133 50,1110 49,1100 52,1075 57,1065 60,1030 75,1022 84,1012 91,986 77,985 70,976 85,975 94,957 105,950 96,941 100,936 127,938 130,925 137,918 137,902 152,896 165,898 169,888 183,898 193,882 195,858 206,846 225,864 262,873 275,881 288,881 313,893 313,903 327,930 327,953 360,960 371,969 390,961 400,948 420,948 430,962 475,955 495,941 515,937 535,948 550,953 578,947 585,938 600,942 607,933 604,905 611,888 608,860 611,820 620,790 610,772 625,770 638,781 645,805 660,830 674,826 677,813 708,784 703,770 707,750 665,716 662,700 673,680 675,660 688,627 706,610 704,597 727,577 737,562 750,552 785,508 803,511 810,502 804,488 807,473 830,457 868,411 884,423 912,397 932,363 937,325 947,325 961,306 995,290 1010,289 1013,270 1030,249 1020,238 1002,225 1001,214 1010,209 1020,218 1033,236 1055,237 1077,228 1085,219 1122,202 1117,180 1107,157 1097,150 1092,135 1095,125 1112,130 1128,131 1133,138 1145,138 1147,150 1173,179 1188,189 1199,183 1202,162 1212,158 1227,168 1237,157 1250,175 1255,193 1272,209 1300,209 1310,195 1317,170 1330,155 1370,98 1395,95 1418,76 1450,75"],
];

const boundary = ring
  .flatMap(([sheet, points]) => {
    const s = sheets[sheet];
    return points.split(" ").map((pair) => {
      const [u, v] = pair.split(",").map(Number);
      return `${(s.x + u / s.sx).toFixed(1)},${(s.y + v / s.sy).toFixed(1)}`;
    });
  })
  .join(" ");

const Spinner = ({ id, value, width, name }) => (
  <SpinBox $width={width}>
    <SpinInput id={id} defaultValue={value} />
    <SpinButtons>
      <PlainButton type="button" aria-label={`Increase ${name}`}><Triangle dir="up" w={14} h={10} /></PlainButton>
      <PlainButton type="button" aria-label={`Decrease ${name}`}><Triangle dir="down" w={14} h={10} /></PlainButton>
    </SpinButtons>
  </SpinBox>
);

export default function App() {
  return (
    <Window>
      <GlobalStyle />
      <Toolbars>
        <ToolBar tools={fileTools} />
        <ToolBar tools={mapTools} />
        <ToolBar tools={metaTools} />
        <ToolBar tools={pythonTools} />
        <ToolBar tools={helpTools} fill />
      </Toolbars>

      <Body>
        <Dock>
          <Panel $grow={5}>
            <Header title="Browser" />
            <PanelToolBar tools={browserTools} />
            <TreeBox>
              <Tree>
                {nodes.map((n) => (
                  <Node key={n.name} $depth={n.depth}>
                    <Toggle type="button" aria-label={`Toggle ${n.name}`} $shown={Boolean(n.state)}>
                      {n.state === "down" ? <Triangle dir="down" w={15} h={9} /> : <Triangle dir="right" w={8} h={15} />}
                    </Toggle>
                    <NodeIcon>{n.icon}</NodeIcon>
                    {n.name}
                  </Node>
                ))}
              </Tree>
              <ScrollBar>
                <ScrollButton type="button" aria-label="Scroll up"><Triangle dir="up" w={16} h={9} /></ScrollButton>
                <ScrollGap $grow={50} />
                <ScrollThumb />
                <ScrollGap $grow={103} />
                <ScrollButton type="button" aria-label="Scroll down"><Triangle dir="down" w={16} h={9} /></ScrollButton>
              </ScrollBar>
            </TreeBox>
          </Panel>
          <RowSplitter><Dots /></RowSplitter>
          <Panel $grow={4}>
            <Header title="Layers" />
            <PanelToolBar tools={layerTools} />
            <LayerList>
              <LayerRow>
                <CheckBox type="checkbox" id="layer-shannxi" defaultChecked />
                <Swatch />
                <LayerName htmlFor="layer-shannxi">Shannxi</LayerName>
              </LayerRow>
            </LayerList>
          </Panel>
        </Dock>
        <ColumnSplitter><Dots $vertical /></ColumnSplitter>
        <Canvas>
          <MapDrawing viewBox="602 80 1955 1457" role="img" aria-label="Shannxi">
            <polygon points={boundary} fill="#85b66f" stroke="#232323" strokeWidth="1.600" strokeLinejoin="round" />
          </MapDrawing>
        </Canvas>
      </Body>

      <StatusBar>
        <Locator>
          <svg width="26" height="28" viewBox="0 0 26 28" fill="none" stroke="#8a8a8a" strokeWidth="2">
            <circle cx="11" cy="11" r="9" />
            <path d="M17 18l7 8" strokeWidth="3" />
          </svg>
          <LocatorInput aria-label="Locator" placeholder="Type to locate (⌘K)" />
        </Locator>
        <Message>Ready</Message>

        <Field $before={0}>
          <label htmlFor="coordinate">Coordinate</label>
          <TextBox id="coordinate" defaultValue="-85.9,-3.3" />
        </Field>
        <Field $before={8}>
          <PlainButton type="button" aria-label="Toggle extents">
            <svg width="32" height="32" viewBox="0 0 32 32">
              <ellipse cx="19" cy="23" rx="10" ry="8" fill="#b9aaa8" />
              <path d="M3 9Q2 4 7 3l5-2 6 10 6 4q3 8-2 13-8 3-12-4z" fill="#fff" stroke="#000" strokeWidth="2.500" />
              <path d="M3 9q4 8 8 10M8 4l5 10M12 2l5 9" stroke="#000" strokeWidth="3" />
              <circle cx="18" cy="23" r="6" fill="#fff" stroke="#000" strokeWidth="2.500" />
              <circle cx="18" cy="23" r="2" fill="none" stroke="#000" strokeWidth="2" />
              <path d="M21 7h2M25 5h2M28 2h2M0 21h2M4 20h2" stroke="#000" strokeWidth="2" />
            </svg>
          </PlainButton>
        </Field>
        <Field $before={26}>
          <label htmlFor="scale">Scale</label>
          <SelectBox>
            <Select id="scale"><option>1:4309539</option></Select>
            <SelectArrow><Triangle dir="down" w={16} h={9} /></SelectArrow>
          </SelectBox>
        </Field>
        <Field $before={24} $gap={16}>
          <PlainButton type="button" aria-label="Lock scale">
            <svg width="26" height="30" viewBox="0 0 26 30">
              <path d="M6 15V9q0-7 7-7t7 7v6" fill="none" stroke="#8f8f8f" strokeWidth="3" />
              <rect x="1" y="14" width="24" height="16" rx="3" fill="#666" />
            </svg>
          </PlainButton>
          <label htmlFor="magnifier">Magnifier</label>
        </Field>
        <Field $before={8}>
          <Spinner id="magnifier" name="magnifier" value="100%" width={192} />
        </Field>
        <Field $before={18} $gap={18}>
          <label htmlFor="rotation">Rotation</label>
          <Spinner id="rotation" name="rotation" value="0.0 °" width={183} />
        </Field>
        <Field $before={13} $gap={11}>
          <CheckBox type="checkbox" id="render" defaultChecked />
          <label htmlFor="render">Render</label>
        </Field>
        <Field $before={32}>
          <PlainButton type="button">
            <svg width="32" height="30" viewBox="0 0 32 30" fill="none" stroke="#737373" strokeWidth="2">
              <path d="M10 2h12l6 8H4z" fill="#aaa" />
              <path d="M1 13h30M4 10q12 6 24 0M5 14q0 10 11 14 11-4 11-14M7 20q9 5 18 0M16 2v26M11 2q-3 14 3 26M21 2q3 14-3 26" />
            </svg>
            EPSG:4019
          </PlainButton>
        </Field>
        <Field $before={46}>
          <PlainButton type="button" aria-label="Messages">
            <svg width="32" height="30" viewBox="0 0 32 30">
              <path d="M16 0c9 0 16 5 16 13 0 5-3 9-6 11 0 3 2 5 4 6-5 0-9-2-11-4h-3C7 26 0 21 0 13S7 0 16 0z" fill="#666" />
              <g fill="#fff"><circle cx="8" cy="13" r="2.500" /><circle cx="16" cy="13" r="2.500" /><circle cx="24" cy="13" r="2.500" /></g>
            </svg>
          </PlainButton>
        </Field>
      </StatusBar>
    </Window>
  );
}
